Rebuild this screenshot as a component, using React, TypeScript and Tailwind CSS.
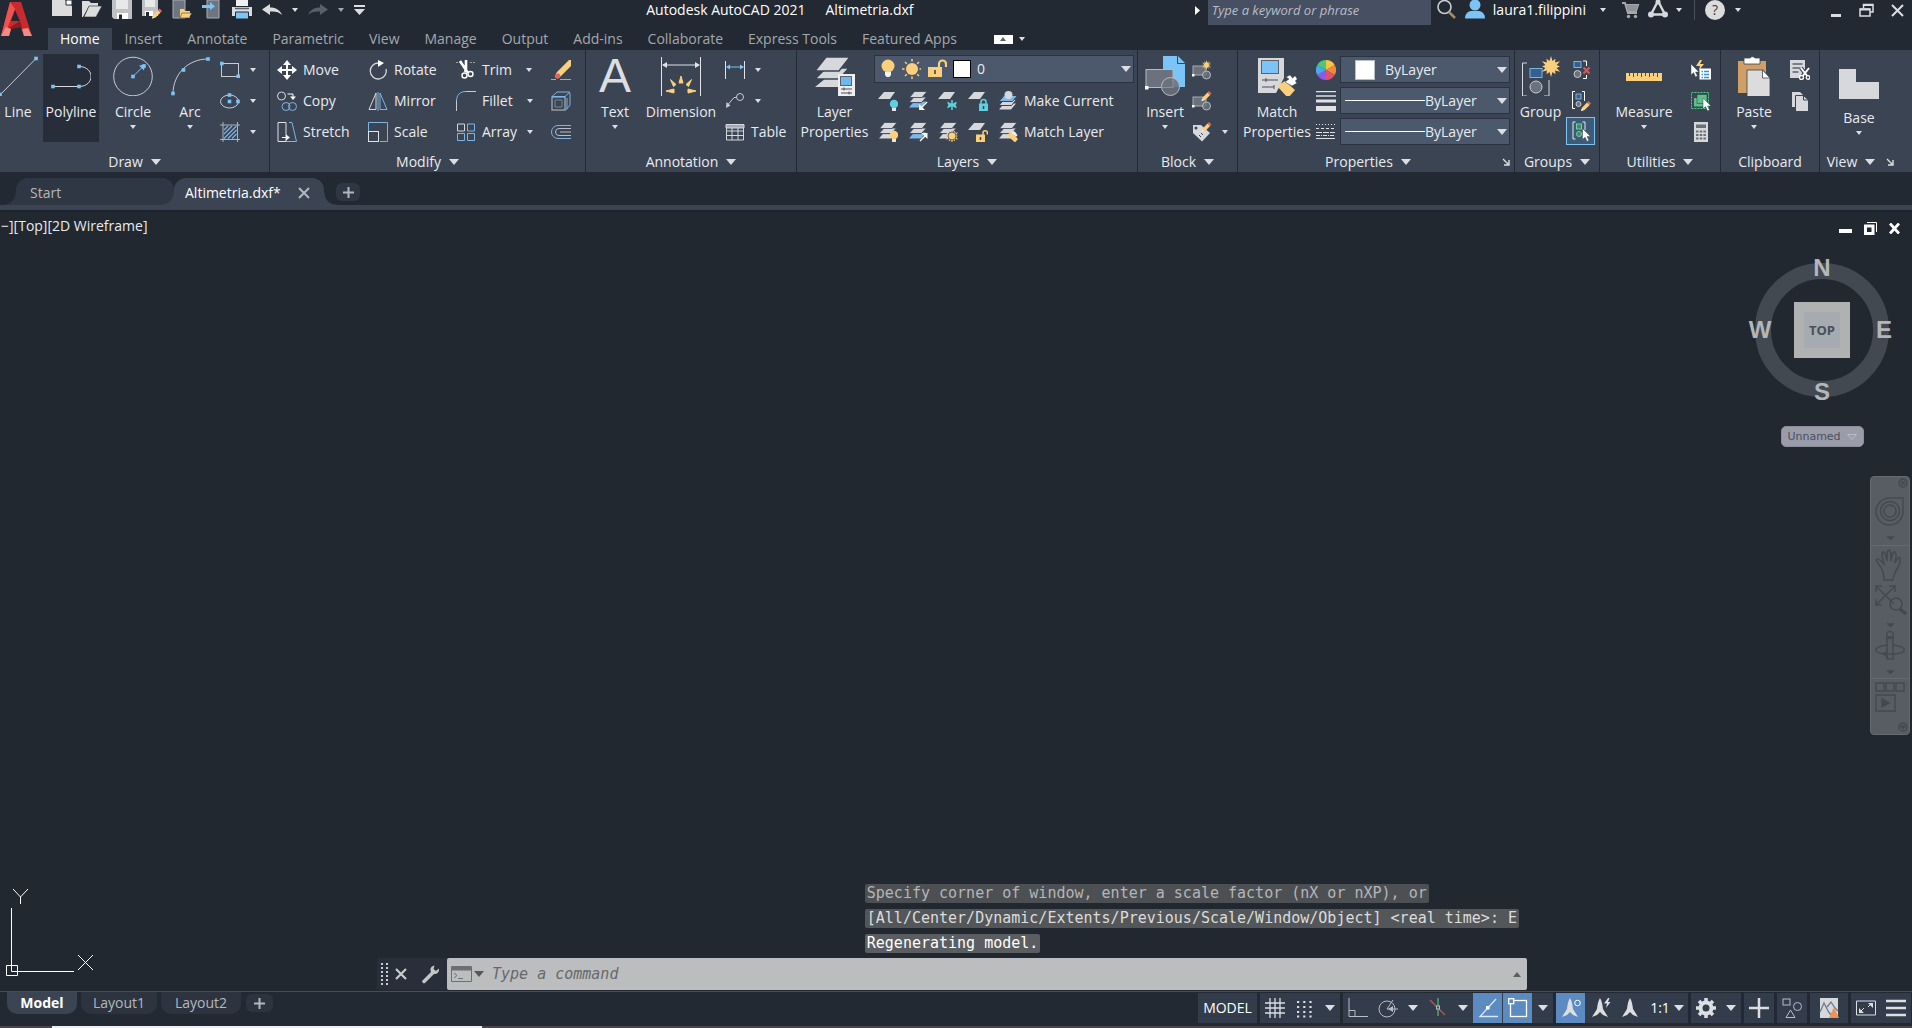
import React from "react";
import clsx from "clsx";

type IconProps = { children: React.ReactNode; size?: number; className?: string };

// Small icons live on a 20px grid, ribbon icons on a 40px grid
const Icon = ({ children, size = 20, className }: IconProps) => (
  <svg
    width={size}
    height={size}
    viewBox={`0 0 ${size} ${size}`}
    fill="none"
    className={clsx("shrink-0", className)}
    aria-hidden="true"
  >
    {children}
  </svg>
);

type CaretProps = { big?: boolean; dark?: boolean; className?: string };

const Caret = ({ big, dark, className }: CaretProps) => (
  <svg
    width={big ? 10 : 6}
    height={big ? 6 : 4}
    viewBox="0 0 10 6"
    preserveAspectRatio="none"
    className={clsx("shrink-0", dark ? "fill-[#55585b]" : "fill-[#dcdee2]", className)}
    aria-hidden="true"
  >
    <path d="M0 0h10L5 6z" />
  </svg>
);

const Dot = ({ x, y }: { x: number; y: number }) => (
  <rect x={x - 1.8} y={y - 1.8} width="3.6" height="3.6" fill="#7cc4f5" />
);

/* ---------- shared icon parts ---------- */

const Sheets = ({ mid = "#d6d8dc", low = "#d6d8dc" }: { mid?: string; low?: string }) => (
  <>
    <path d="M6 10.5h12l-5 6H1z" fill={low} />
    <path d="M6 6h12.5l-5 5.6H1z" fill={mid} stroke="#3b4453" />
    <path d="M6.500 .5H19l-5 6H1.500z" fill="#d6d8dc" stroke="#3b4453" strokeWidth=".8" />
  </>
);

const Bulb = ({ color }: { color: string }) => (
  <>
    <circle cx="16" cy="13" r="4.200" fill={color} />
    <rect x="14" y="17" width="4" height="3" fill="#e6e6e6" />
  </>
);

const Pencil = ({ x = 0, y = 0 }: { x?: number; y?: number }) => (
  <g transform={`translate(${x} ${y})`}>
    <path d="m0 10 1.200-3.600L6 1.500l2.600 2.600-5 4.800z" fill="#fbd07d" />
    <path d="M6 1.500 7.500 0 10 2.500 8.600 4.100z" fill="#e06a5c" />
    <path d="m0 10 .8-2.500 1.700 1.700z" fill="#efefef" />
  </g>
);

const Cursor = ({ x, y }: { x: number; y: number }) => (
  <path
    transform={`translate(${x} ${y})`}
    d="M0 0v11l2.600-2.300L4.500 13l2-1-1.900-4H8z"
    fill="#fff"
    stroke="#3b4453"
    strokeWidth=".5"
  />
);

const Star = ({ cx, cy, r, k = 0.55 }: { cx: number; cy: number; r: number; k?: number }) => {
  const points = Array.from({ length: 24 }, (_, i) => {
    const a = (i * Math.PI) / 12;
    const d = i % 2 ? r * k : i % 4 ? r * 0.85 : r;
    return `${cx + d * Math.sin(a)},${cy - d * Math.cos(a)}`;
  }).join(" ");
  return <polygon points={points} fill="#fbd07d" />;
};

const BlockShape = () => (
  <>
    <rect x="1" y="6" width="13" height="9" fill="#6b717d" stroke="#a8acb4" />
    <circle cx="14.500" cy="15" r="4" fill="#6b717d" fillOpacity=".8" stroke="#b6bac1" />
    <rect y="14" width="2.500" height="2.500" fill="#fff" />
  </>
);

/* ---------- 20px icons ---------- */

const icons = {
  rect: (
    <Icon>
      <rect x="1.500" y="3.500" width="17" height="13" stroke="#c9ccd2" />
      <Dot x={1.8} y={3.5} />
      <Dot x={18.2} y={16.2} />
    </Icon>
  ),
  ellipse: (
    <Icon>
      <ellipse cx="9.500" cy="10.500" rx="9" ry="6.500" stroke="#c9ccd2" />
      <Dot x={9.5} y={4} />
      <Dot x={9.5} y={10.5} />
      <Dot x={18} y={10.5} />
    </Icon>
  ),
  hatch: (
    <Icon>
      <path d="M3 0v20M17.500 0v20M0 3h20M0 17.500h20" stroke="#aeb2ba" />
      <path d="m4 8 4-4M4 12l8-8M4 16.500 16.500 4M8 16.500l8.500-8.500M12 16.500l4.500-4.500" stroke="#7cb4e4" strokeWidth="1.200" />
    </Icon>
  ),
  move: (
    <Icon>
      <path d="M10 2v16M2 10h16" stroke="#fff" strokeWidth="2" />
      <path d="m10 0 4 5H6zM10 20l4-5H6zM0 10l5-4v8zM20 10l-5-4v8z" fill="#fff" />
    </Icon>
  ),
  copy: (
    <Icon>
      <circle cx="4.500" cy="5" r="4" stroke="#d6d8dc" />
      <path d="M10.500 3H16v4" stroke="#fff" />
      <path d="M13 5.500h6L16 9z" fill="#fff" />
      <circle cx="9" cy="15.500" r="4" stroke="#7cb4e4" />
      <circle cx="15.500" cy="15.500" r="4" stroke="#7cb4e4" />
    </Icon>
  ),
  stretch: (
    <Icon>
      <path d="M1 .5h8v19H1z" stroke="#e1e3e7" />
      <path d="M12 .5h3l4.500 19H9" stroke="#7cb4e4" />
      <path d="M5 15.500h5" stroke="#fff" />
      <path d="m9 12.500 4 3-4 3z" fill="#fff" />
    </Icon>
  ),
  rotate: (
    <Icon>
      <path d="M10.500 3a8 8 0 1 0 7.500 6" stroke="#d6d8dc" strokeWidth="1.300" />
      <path d="m10 0 6 3-6 4z" fill="#fff" />
    </Icon>
  ),
  mirror: (
    <Icon>
      <path d="M8 2v16.500H1z" stroke="#d6d8dc" />
      <path d="M12 2v16.500h7z" stroke="#7cb4e4" />
      <path d="M10 1v19" stroke="#7cb4e4" />
    </Icon>
  ),
  scale: (
    <Icon>
      <path d="M.5 9V.5h19v19H12" stroke="#7cb4e4" />
      <rect x=".5" y="9.500" width="10" height="10" stroke="#e1e3e7" />
    </Icon>
  ),
  trim: (
    <Icon>
      <path d="M0 2.500h4M14 2.500h6" stroke="#9aa0aa" strokeDasharray="2 1" />
      <path d="m4 1 8 12M10 0v9l-1 3" stroke="#fff" strokeWidth="2.600" />
      <circle cx="8.500" cy="15.500" r="2.500" stroke="#fff" strokeWidth="1.400" />
      <circle cx="14.500" cy="14" r="2.500" stroke="#fff" strokeWidth="1.400" />
    </Icon>
  ),
  fillet: (
    <Icon>
      <path d="M.5 10C.5 4 4 .5 10 .5" stroke="#7cb4e4" />
      <path d="M10 .5h10M.5 10v10" stroke="#c9ccd2" />
    </Icon>
  ),
  array: (
    <Icon>
      <path d="M1.500 2h7v7h-7z" stroke="#d6d8dc" />
      <path d="M11.500 2h7v7h-7zM1.500 11.500h7v7h-7zM11.500 11.500h7v7h-7z" stroke="#7cb4e4" />
    </Icon>
  ),
  erase: (
    <Icon>
      <path d="M0 19.500h5M9 19.500h11" stroke="#7cb4e4" />
      <path d="M18 0h2v6L10 16l-4-4z" fill="#fbd07d" />
      <path d="m6 12 4 4-2 1.500L5 14z" fill="#fff" />
      <circle cx="6.500" cy="16" r="2.700" fill="#e8615c" />
    </Icon>
  ),
  explode: (
    <Icon>
      <rect x="1" y="6" width="13" height="13" stroke="#9ca1ab" strokeWidth="1.400" />
      <path d="M1 5.500 6 1h13l-5 4.500zM19 2v12l-4 5M16 7v11" stroke="#7cb4e4" />
      <path d="M4 9h7v7H4z" stroke="#7d8490" />
    </Icon>
  ),
  offset: (
    <Icon>
      <path d="M20 3.500H7a6.500 6.500 0 0 0 0 13h13" stroke="#7cb4e4" />
      <path d="M20 6.500H8a3.500 3.500 0 0 0 0 7h12" stroke="#b9bdc5" />
      <path d="M20 10H9" stroke="#b9bdc5" />
    </Icon>
  ),
  linear: (
    <Icon>
      <path d="M.5 1v18M19.500 1v18" stroke="#e1e3e7" />
      <path d="M2 7h16" stroke="#7cc4f5" />
      <path d="m1 7 4-2.500v5zM19 7l-4-2.500v5z" fill="#7cc4f5" />
    </Icon>
  ),
  leader: (
    <Icon>
      <circle cx="15" cy="6" r="3.500" stroke="#c9ccd2" />
      <path d="M11.500 6.500H9l-6 7" stroke="#c9ccd2" />
      <path d="m1 17 .5-6 4 3.500z" fill="#c9ccd2" />
    </Icon>
  ),
  table: (
    <Icon>
      <path d="M1.500 3h17v15h-17zM1.500 9h17M1.500 13.500h17M7 6v12M13 6v12" stroke="#d6d8dc" />
      <path d="M1 2.500h18V6H1z" fill="#a4a9b3" stroke="#d6d8dc" />
    </Icon>
  ),
  layOff: (
    <Icon>
      <path d="M6 1h11l-5 7H0z" fill="#d6d8dc" />
      <Bulb color="#5fd0e0" />
    </Icon>
  ),
  layIsolate: (
    <Icon>
      <Sheets low="#7cb8ee" />
      <path d="m19 11-6 6" stroke="#fff" strokeWidth="1.500" />
      <path d="M11 19v-6l6 6z" fill="#fff" />
    </Icon>
  ),
  layFreeze: (
    <Icon>
      <path d="M6 1h11l-5 7H0z" fill="#d6d8dc" />
      <path d="M14 9v10M9.500 11.500l9 5M18.500 11.500l-9 5M10 14h8" stroke="#5fd0e0" strokeWidth="1.500" />
    </Icon>
  ),
  layLock: (
    <Icon>
      <path d="M6 1h11l-5 7H0z" fill="#d6d8dc" />
      <path d="M13 13v-2a2.500 2.500 0 0 1 5 0v2" stroke="#5fd0e0" strokeWidth="1.500" />
      <rect x="11" y="12.500" width="9" height="7.500" fill="#5fd0e0" />
      <path d="M15.500 15v3" stroke="#3b4453" strokeWidth="1.500" />
    </Icon>
  ),
  makeCurrent: (
    <Icon>
      <path d="M6 12.500h12l-5 6H1z" fill="#d6d8dc" />
      <path d="M6 8.500h12.500l-5 6H1z" fill="#d6d8dc" stroke="#3b4453" />
      <path d="M6 4.500h13.500l-5 6H1z" fill="#7cb8ee" stroke="#3b4453" />
      <circle cx="10.500" cy="4" r="4" fill="#d6d8dc" />
    </Icon>
  ),
  layOn: (
    <Icon>
      <Sheets />
      <Bulb color="#fbd07d" />
    </Icon>
  ),
  layUnisolate: (
    <Icon>
      <Sheets low="#7cb8ee" />
      <path d="m12 19 6-6" stroke="#fff" strokeWidth="1.500" />
      <path d="M19.500 11v6l-6-6z" fill="#fff" />
    </Icon>
  ),
  layThaw: (
    <Icon>
      <Sheets />
      <Star cx={14} cy={14} r={7} k={0.6} />
      <circle cx="14" cy="14" r="4" fill="#fbd07d" stroke="#3b4453" strokeWidth=".8" />
    </Icon>
  ),
  layUnlock: (
    <Icon>
      <path d="M6 1h11l-5 7H0z" fill="#d6d8dc" />
      <path d="M15 13v-2a2.200 2.200 0 0 1 4.400 0v1.500" stroke="#fbd07d" strokeWidth="1.500" />
      <rect x="8" y="12.500" width="9" height="7.500" fill="#fbd07d" />
      <path d="M12.500 15v3" stroke="#3b4453" strokeWidth="1.500" />
    </Icon>
  ),
  matchLayer: (
    <Icon>
      <Sheets />
      <path d="m9 13 4-3 7 7-3 3.500z" fill="#fbd07d" />
      <path d="m13 10 3-1 3.500 4-1.500 2z" fill="#efefef" />
    </Icon>
  ),
  createBlock: (
    <Icon>
      <BlockShape />
      <Star cx={14.5} cy={5} r={5.5} k={0.4} />
    </Icon>
  ),
  editBlock: (
    <Icon>
      <BlockShape />
      <Pencil x={9.5} />
    </Icon>
  ),
  editAttr: (
    <Icon>
      <path d="M1 3h8l9 8-8 8.500L1 11z" fill="#d6d8dc" />
      <circle cx="4" cy="6" r="1.500" fill="#3b4453" />
      <path d="m7 13 2 2m0-4 2 2" stroke="#3b4453" />
      <Pencil x={9.5} />
    </Icon>
  ),
  wheel: (
    <Icon>
      <path d="M10 10V0a10 10 0 0 1 8.700 5z" fill="#f6c544" />
      <path d="m10 10 8.700-5a10 10 0 0 1 0 10z" fill="#f0883e" />
      <path d="m10 10 8.700 5A10 10 0 0 1 10 20z" fill="#e0526a" />
      <path d="M10 10v10a10 10 0 0 1-8.700-5z" fill="#8a5af0" />
      <path d="m10 10-8.700 5a10 10 0 0 1 0-10z" fill="#4aa8ec" />
      <path d="M10 10 1.300 5A10 10 0 0 1 10 0z" fill="#4cc878" />
    </Icon>
  ),
  lineWeight: (
    <Icon>
      <path d="M0 .5h20M0 5h20" stroke="#dfe1e5" strokeWidth="1.500" />
      <path d="M0 10h20" stroke="#dfe1e5" strokeWidth="3" />
      <path d="M0 17.500h20" stroke="#dfe1e5" strokeWidth="5" />
    </Icon>
  ),
  lineType: (
    <Icon>
      <path d="M0 2.500h19" stroke="#dfe1e5" strokeDasharray="1 2" />
      <path d="M0 6.500h19" stroke="#dfe1e5" strokeDasharray="3 2" />
      <path d="M0 10.500h19" stroke="#dfe1e5" strokeDasharray="6 1" />
      <path d="M0 13.500h19" stroke="#dfe1e5" strokeDasharray="4 1 1 1" />
      <path d="M0 16.500h19" stroke="#dfe1e5" />
    </Icon>
  ),
  ungroup: (
    <Icon>
      <rect x="3" y="1.500" width="7" height="6" fill="#355f8c" stroke="#7cb4e4" />
      <circle cx="6.500" cy="14" r="3.500" fill="#6b717d" stroke="#c9ccd2" />
      <path d="M12 1h3.500v5M12 18.500h3.500V15" stroke="#fff" />
      <path d="m12.500 7.500 6 6m0-6-6 6" stroke="#e0524e" strokeWidth="2.200" />
    </Icon>
  ),
  groupEdit: (
    <Icon>
      <path d="M4 .5H1.500v17H4M11 .5h2.500V10" stroke="#fff" />
      <rect x="5" y="3" width="5" height="5" fill="#355f8c" stroke="#7cb4e4" />
      <circle cx="7.500" cy="13" r="2.500" fill="#6b717d" stroke="#c9ccd2" />
      <Pencil x={10} y={10} />
    </Icon>
  ),
  groupSelect: (
    <Icon>
      <path d="M4.500 1H2v17h2.500M11.500 1H14v8" stroke="#e6e8eb" />
      <rect x="5.500" y="3" width="5" height="5" fill="#3f8c63" stroke="#6fd59b" />
      <circle cx="8" cy="13" r="2.500" fill="#3f8c63" stroke="#6fd59b" />
      <Cursor x={11.5} y={7.5} />
    </Icon>
  ),
  quickSelect: (
    <Icon>
      <path d="m9 0-4 6h4l-1 4 5-6H9l2-4z" fill="#fbd07d" />
      <rect x="8.500" y="8.500" width="11.500" height="11" fill="#fff" />
      <path d="M10.500 11.500H12m1 0h5m-7.500 3H12m1 0h5m-7.500 3H12m1 0h5" stroke="#3f8fd6" strokeWidth="1.300" />
      <Cursor x={0} y={4} />
    </Icon>
  ),
  selectAll: (
    <Icon>
      <rect x=".5" y="1.500" width="17" height="16" stroke="#4fd18b" strokeDasharray="2 1" />
      <rect x="3" y="7" width="9" height="8.500" fill="#5fbf8b" />
      <rect x="6" y="3.500" width="10" height="9" fill="#5fbf8b" stroke="#3b4453" strokeWidth=".6" />
      <Cursor x={12} y={7} />
    </Icon>
  ),
  calculator: (
    <Icon>
      <rect x="3" width="14" height="20" fill="#d6d8dc" />
      <rect x="5" y="2.500" width="10" height="3.500" fill="#6b6f76" />
      <path d="M5 9.500h10M5 13h10M5 16.500h10" stroke="#6b6f76" strokeWidth="2" strokeDasharray="2.500 1.200" />
    </Icon>
  ),
  cut: (
    <Icon>
      <path d="M0 0h15v9l-6 9H0z" fill="#d6d8dc" />
      <path d="M2.500 4h10m-10 4h8m-8 4h6" stroke="#5c626d" strokeWidth="1.300" />
      <path d="m11 8 7 9m1-9-7 9" stroke="#3b4453" strokeWidth="4" />
      <path d="m11 8 7 9m1-9-7 9" stroke="#fff" strokeWidth="2" />
      <circle cx="11.500" cy="17.500" r="2" fill="#3b4453" stroke="#fff" strokeWidth="1.300" />
      <circle cx="18" cy="17.500" r="1.800" fill="#3b4453" stroke="#fff" strokeWidth="1.300" />
    </Icon>
  ),
  copyClip: (
    <Icon>
      <path d="M2 1h8l3 3v12H2z" fill="#d6d8dc" />
      <path d="M5.500 4.500h8L18.500 9v11.500h-13z" fill="#d6d8dc" stroke="#3b4453" />
      <path d="M13.500 4.500V9h5" stroke="#3b4453" />
    </Icon>
  ),
};

/* ---------- 40px icons ---------- */

const bigIcons = {
  line: (
    <Icon size={40}>
      <path d="M2 39 38 2.500" stroke="#c9ccd2" />
      <Dot x={2} y={38.5} />
      <Dot x={38} y={2.5} />
    </Icon>
  ),
  polyline: (
    <Icon size={40}>
      <path d="M2 30.500h26c16 0 16-20 0-20" stroke="#d6d8dc" />
      <Dot x={2} y={30.5} />
      <Dot x={28} y={30.5} />
      <Dot x={28} y={10.5} />
    </Icon>
  ),
  circle: (
    <Icon size={40}>
      <circle cx="20" cy="20.500" r="19.300" stroke="#c9ccd2" />
      <path d="m20 20.500 10.500-10.500" stroke="#7cc4f5" />
      <path d="m32 8.500-1 6-5-5z" fill="#7cc4f5" />
      <Dot x={20} y={20.5} />
      <Dot x={31} y={10} />
    </Icon>
  ),
  arc: (
    <Icon size={40}>
      <path d="M3 38C3 18 18 3 38 3" stroke="#c9ccd2" />
      <Dot x={3} y={37.5} />
      <Dot x={13.5} y={14} />
      <Dot x={38} y={3} />
    </Icon>
  ),
  dimension: (
    <Icon size={40}>
      <path d="M.5 1v40M39.500 1v40M2 9h36" stroke="#e1e3e7" />
      <path d="m1 9 5-3v6zM39 9l-5-3v6z" fill="#e1e3e7" />
      <path
        d="m20 20 2 7h-4zM9.500 23.500l5.500 5-2.500 2zM30.500 23.500l-5.500 5 2.500 2zM5 35l8-2v4zM35 35l-8-2v4z"
        fill="#fbd07d"
        stroke="#fbd07d"
      />
    </Icon>
  ),
  layerProps: (
    <Icon size={40}>
      <path d="M11 22h23L24 31H0z" fill="#d6d8dc" />
      <path d="M11 12h23L24 23H0z" fill="#d6d8dc" stroke="#3b4453" strokeWidth="1.500" />
      <path d="M11 1h24L24 15H0z" fill="#d6d8dc" stroke="#3b4453" strokeWidth="1.500" />
      <rect x="23" y="18" width="17" height="22" fill="#efefef" />
      <rect x="25.500" y="20.500" width="11" height="9" fill="#6fb7ee" stroke="#5c626d" />
      <path d="M26 33h11M26 37h11M29 31.500v3M34 35.500v3" stroke="#4a4f59" />
    </Icon>
  ),
  insert: (
    <Icon size={40}>
      <path d="M18 0h15l7 7v24H18z" fill="#7cc4f5" />
      <path d="M32.500 0v7.500H40" stroke="#3b4453" />
      <rect x="1" y="13.500" width="27" height="18" fill="#6b717d" stroke="#b6bac1" />
      <circle cx="25.500" cy="30.500" r="9" fill="#6b717d" fillOpacity=".85" stroke="#b6bac1" />
      <path d="M16.500 31.500H28v-11" stroke="#9ca1ab" strokeDasharray="1 1" />
      <rect y="30" width="3.500" height="3.500" fill="#fff" />
    </Icon>
  ),
  matchProps: (
    <Icon size={40}>
      <path d="M1 2h26v20l-8 15H1z" fill="#d6d8dc" />
      <rect x="4.500" y="4.500" width="17" height="13" fill="#7cc4f5" stroke="#5c626d" />
      <path d="M5 24h16M5 31h12M9 22v4M17 29v4" stroke="#4a4f59" />
      <path d="m20 30 8-5 10 9-7 8z" fill="#fbd07d" />
      <path d="m28 26 4-3-3-2 4-2 7 8-5 3z" fill="#fff" stroke="#3b4453" strokeWidth=".5" />
      <path d="m34 24 4-4 2 3-4 4z" fill="#fff" />
    </Icon>
  ),
  group: (
    <Icon size={40}>
      <path d="M6 7H1.500v33H6M23 40h5V24" stroke="#d6d8dc" />
      <rect x="9" y="12.500" width="12" height="9" fill="#355f8c" stroke="#7cb4e4" />
      <circle cx="15" cy="31" r="6" fill="#6b717d" stroke="#c9ccd2" />
      <Star cx={30} cy={10.5} r={10.5} />
    </Icon>
  ),
  measure: (
    <Icon size={40}>
      <rect x="2" y="17" width="36" height="8" fill="#fbd07d" />
      <path d="M5.500 17v3m4-3v4m4-4v3m4-3v4m4-4v3m4-3v4m4-4v3m4-3v4" stroke="#4a4f59" />
    </Icon>
  ),
  paste: (
    <Icon size={40}>
      <path d="M4 5h28v32H4z" fill="#cf9f66" />
      <path d="M10 2h6a3 3 0 0 1 5 0h5v6H10z" fill="#fff" stroke="#3b4453" strokeWidth=".8" />
      <path d="M13 14h16l7 8v19H13z" fill="#dcdcdc" stroke="#3b4453" strokeWidth=".8" />
      <path d="m28.500 14 7.500 8h-7.500z" fill="#fff" stroke="#3b4453" strokeWidth=".8" />
    </Icon>
  ),
  base: (
    <Icon size={40}>
      <path d="M0 7h17v13h23v17H0z" fill="#d6d8dc" />
    </Icon>
  ),
};

/* ---------- ribbon building blocks ---------- */

type PanelProps = {
  title: string;
  width: string;
  caret?: boolean;
  launcher?: boolean;
  last?: boolean;
  children: React.ReactNode;
};

const Panel = ({ title, width, caret = true, launcher, last, children }: PanelProps) => (
  <section className={clsx("flex shrink-0 flex-col", width, !last && "border-r border-[#232a34]")}>
    <div className="flex flex-1 items-start pt-1">{children}</div>
    <div className="flex h-5 items-center">
      <button type="button" className="flex flex-1 items-center justify-center gap-2">
        {title}
        {caret && <Caret big />}
      </button>
      {launcher && (
        <button type="button" aria-label={`${title} settings`} className="w-4">
          <svg width="8" height="8" viewBox="0 0 8 8" className="mx-auto" fill="none" stroke="#dcdee2">
            <path d="m1 1 5 5M7 2v5H2" strokeWidth="1.400" />
          </svg>
        </button>
      )}
    </div>
  </section>
);

type BigButtonProps = {
  icon: React.ReactNode;
  label: string;
  caret?: boolean;
  active?: boolean;
  className?: string;
};

const BigButton = ({ icon, label, caret, active, className }: BigButtonProps) => (
  <button
    type="button"
    className={clsx(
      "flex h-22 shrink-0 flex-col items-center pt-0.5 leading-5",
      active && "bg-[#272e39]",
      className
    )}
  >
    <span className="mb-1.5 flex h-10 items-center justify-center">{icon}</span>
    <span>{label}</span>
    {caret && <Caret className="mt-[3px]" />}
  </button>
);

type ToolProps = { icon: React.ReactNode; label?: string; name?: string; caret?: string };

const Tool = ({ icon, label, name, caret }: ToolProps) => (
  <button type="button" aria-label={label ? undefined : name} className="flex h-[31px] items-center gap-1.5">
    {icon}
    {label}
    {caret && <Caret className={caret} />}
  </button>
);

const PropertySelect = ({ name, line }: { name: string; line?: boolean }) => (
  <div className="flex h-[27px] items-center border border-[#2b3340] bg-[#4c586b]">
    {line ? (
      <span className="ml-1 h-px w-20 bg-white" />
    ) : (
      <span className="mr-2.5 ml-3.5 size-5 border border-[#b9bdc5] bg-white" />
    )}
    <select aria-label={name} className="h-full min-w-0 flex-1 appearance-none bg-transparent outline-none">
      <option>ByLayer</option>
    </select>
    <Caret big className="mr-0.5" />
  </div>
);

/* ---------- title bar ---------- */

const quickAccess = [
  {
    name: "New",
    icon: (
      <Icon>
        <path d="M0 0h13l7 6v10H0z" fill="#dcdcdc" />
        <path d="M14 0v5h6V0z" fill="#fff" stroke="#222933" />
      </Icon>
    ),
  },
  {
    name: "Open",
    icon: (
      <Icon>
        <path d="M0 1h7l2 2h7v3H7L1 17H0z" fill="#dcdcdc" />
        <path d="M7 6h13l-6 11H2z" fill="#dcdcdc" stroke="#222933" strokeWidth=".6" />
      </Icon>
    ),
  },
  {
    name: "Save",
    icon: (
      <Icon>
        <path d="M0 0h20v19H2l-2-2z" fill="#bfc1c5" />
        <path d="M4 0h12v9H4z" fill="#e8e8e8" />
        <path d="M5 13h11v6H5z" fill="#fff" />
        <path d="M7 14.500h3V19H7z" fill="#222933" />
      </Icon>
    ),
  },
  {
    name: "Save as",
    icon: (
      <Icon>
        <path d="M0 0h16v16H0z" fill="#bfc1c5" />
        <path d="M3 0h10v7H3z" fill="#e8e8e8" />
        <path d="M3 11h8v5H3z" fill="#fff" />
        <path d="M4 12h3v4H4z" fill="#222933" />
        <Pencil x={10} y={8.5} />
      </Icon>
    ),
  },
  {
    name: "Open from web",
    icon: (
      <Icon>
        <path d="M1 0h12v18H1z" fill="#6f7580" stroke="#a8acb4" />
        <path d="M8 9h4l1 2h5v7H8z" fill="#fbd07d" />
        <path d="M10 13h10l-3 5H8z" fill="#fbd07d" stroke="#222933" strokeWidth=".5" />
      </Icon>
    ),
  },
  {
    name: "Save to web",
    icon: (
      <Icon>
        <path d="M5 0h12v18H5z" fill="#6f7580" stroke="#a8acb4" />
        <path d="M0 5h8V2l5 4.500L8 10V8H0z" fill="#7cc4f5" />
      </Icon>
    ),
  },
  {
    name: "Plot",
    icon: (
      <Icon>
        <path d="M4 0h12v6H4z" fill="#efefef" />
        <path d="M0 7h20v9H0z" fill="#dcdcdc" />
        <path d="M3 8.500h14" stroke="#5c626d" strokeWidth="1.500" />
        <path d="M3.500 12h13v7h-13z" fill="#7cc4f5" stroke="#222933" />
      </Icon>
    ),
  },
];

const undoPath = "M8 4v3.500c6 0 10 2.500 12 7.500-3-3-7-4-12-3.500V15L0 9.500z";

const TitleBar = () => (
  <div className="flex h-7 items-center pb-2">
    <div className="flex shrink-0 items-center gap-2.5 pl-1">
      {quickAccess.map((q) => (
        <button type="button" key={q.name} aria-label={q.name}>
          {q.icon}
        </button>
      ))}
      <button type="button" aria-label="Undo" className="flex items-center gap-2.5">
        <Icon>
          <path d={undoPath} fill="#dcdcdc" />
        </Icon>
        <Caret />
      </button>
      <button type="button" aria-label="Redo" className="flex items-center gap-2.5">
        <Icon>
          <path d={undoPath} fill="#5a606b" transform="matrix(-1 0 0 1 20 0)" />
        </Icon>
        <Caret className="opacity-70" />
      </button>
      <button type="button" aria-label="Customize toolbar">
        <svg width="11" height="10" viewBox="0 0 11 10" fill="#dcdee2">
          <path d="M0 0h11v2H0zM0 4h11L5.500 10z" />
        </svg>
      </button>
    </div>

    <h1 className="flex min-w-0 flex-1 justify-center gap-5 whitespace-nowrap text-white">
      <span>Autodesk AutoCAD 2021</span>
      <span>Altimetria.dxf</span>
    </h1>

    <div className="flex shrink-0 items-center pr-2">
      <svg width="5" height="9" viewBox="0 0 5 9" className="mr-2 fill-white">
        <path d="m0 0 5 4.500L0 9z" />
      </svg>
      <input
        type="text"
        aria-label="Search"
        placeholder="Type a keyword or phrase"
        className="mb-[-4px] h-[26px] w-[223px] bg-[#474f62] px-1 pb-1 text-[13px] italic outline-none placeholder:text-[#b9bdc6]"
      />
      <button type="button" aria-label="Find" className="ml-1.5">
        <Icon>
          <circle cx="7.500" cy="7" r="6.500" stroke="#c9ccd2" strokeWidth="1.600" />
          <path d="m12 12 6 6" stroke="#a58b6c" strokeWidth="2.500" />
        </Icon>
      </button>
      <button type="button" className="ml-2 flex items-center gap-2">
        <Icon>
          <circle cx="10" cy="5" r="5.500" fill="#7cc4f5" />
          <path d="M0 18.500c0-5 3-7.500 7-7.500h6c4 0 7 2.500 7 7.500z" fill="#7cc4f5" />
        </Icon>
        <span className="text-[14px] text-white">laura1.filippini</span>
        <Caret className="ml-1.5" />
      </button>
      <button type="button" aria-label="App store" className="ml-3.5">
        <Icon>
          <path d="M2 3h3l3 10h9M6 5h12l-2 6H8" stroke="#a8a8a8" strokeWidth="2" />
          <path d="M6 5h12l-2 6H8z" fill="#8f9296" />
          <circle cx="8.500" cy="16.500" r="1.700" fill="#a8a8a8" />
          <circle cx="15.500" cy="16.500" r="1.700" fill="#a8a8a8" />
        </Icon>
      </button>
      <button type="button" aria-label="Autodesk account" className="ml-2 flex items-center gap-2">
        <Icon>
          <path d="M10 1 3 14.500h14z" stroke="#d6d8dc" strokeWidth="2.400" />
          <circle cx="10" cy="2" r="2.500" fill="#d6d8dc" />
          <circle cx="3" cy="14.500" r="3" fill="#d6d8dc" />
          <circle cx="17" cy="14.500" r="3" fill="#d6d8dc" />
        </Icon>
        <Caret />
      </button>
      <span className="ml-3 h-5 w-px bg-[#4a505b]" />
      <button type="button" aria-label="Help" className="ml-2.5 flex items-center gap-2.5">
        <span className="flex size-5 items-center justify-center rounded-full bg-[#dcdcdc] text-[#333b47]">?</span>
        <Caret />
      </button>
      <button type="button" aria-label="Minimize" className="mt-2.5 ml-[90px] h-[3px] w-2.5 bg-[#dcdee2]" />
      <button type="button" aria-label="Restore" className="ml-[18px]">
        <svg width="15" height="14" viewBox="0 0 15 14" fill="none" stroke="#dcdee2" strokeWidth="1.500">
          <path d="M4.500 5V1.500h9.500V9h-3M1 6h10v7H1z" />
          <path d="M4 2h10M1 6.500h10" strokeWidth="2" />
        </svg>
      </button>
      <button type="button" aria-label="Close" className="ml-[17px]">
        <svg width="13" height="13" viewBox="0 0 13 13" stroke="#dcdee2" strokeWidth="2">
          <path d="m1 1 11 11M12 1 1 12" />
        </svg>
      </button>
    </div>
  </div>
);

const ribbonTabs = [
  "Home",
  "Insert",
  "Annotate",
  "Parametric",
  "View",
  "Manage",
  "Output",
  "Add-ins",
  "Collaborate",
  "Express Tools",
  "Featured Apps",
];

const Header = () => (
  <header className="flex">
    <button type="button" aria-label="Application menu" className="w-12 shrink-0 self-start">
      <svg width="32" height="38" viewBox="0 0 32 38">
        <path d="M10 2h11l11 34h-8l-3-9-9-1-3 10H1z" fill="#c92a30" />
        <path d="m10 2 5 7-8 20-6 7z" fill="#ef5350" />
        <path d="m15 10 5 11H11z" fill="#222933" />
        <path d="m9 28 11-7 2 6-10 2z" fill="#8e1c22" />
        <path d="m1 36 5-9 5 2-2 7zM24 36l-2-7 6-1 4 8z" fill="#f28b87" />
      </svg>
    </button>
    <div className="min-w-0 flex-1">
      <TitleBar />
      <nav className="flex h-[22px] items-center gap-px">
        {ribbonTabs.map((tab) => (
          <button
            type="button"
            key={tab}
            className={clsx(
              "h-full px-3 whitespace-nowrap",
              tab === "Home" ? "bg-[#3b4453] text-white" : "text-[#a4a8ae]"
            )}
          >
            {tab}
          </button>
        ))}
        <button type="button" aria-label="Minimize ribbon" className="ml-6 flex items-center gap-1.5">
          <span className="flex h-[9px] w-[19px] items-center justify-center bg-white">
            <svg width="6" height="4" viewBox="0 0 6 4" fill="#5c626d">
              <path d="M0 4h6L3 0z" />
            </svg>
          </span>
          <Caret />
        </button>
      </nav>
    </div>
  </header>
);

/* ---------- ribbon ---------- */

const Ribbon = () => (
  <div className="flex h-[122px] bg-[#3b4453] whitespace-nowrap text-[#e9ebee]">
    <Panel title="Draw" width="w-[270px]">
      <BigButton icon={bigIcons.line} label="Line" className="mr-[7px] w-9" />
      <BigButton icon={bigIcons.polyline} label="Polyline" active className="w-14" />
      <BigButton icon={bigIcons.circle} label="Circle" caret className="ml-1.5 w-14" />
      <BigButton icon={bigIcons.arc} label="Arc" caret className="ml-px w-14" />
      <div className="ml-0.5">
        <Tool icon={icons.rect} name="Rectangle" caret="ml-1" />
        <Tool icon={icons.ellipse} name="Ellipse" caret="ml-1" />
        <Tool icon={icons.hatch} name="Hatch" caret="ml-1" />
      </div>
    </Panel>

    <Panel title="Modify" width="w-[316px]">
      <div className="grid grid-cols-[91px_88px_95px_auto] pl-[7px]">
        <Tool icon={icons.move} label="Move" />
        <Tool icon={icons.rotate} label="Rotate" />
        <Tool icon={icons.trim} label="Trim" caret="ml-2" />
        <Tool icon={icons.erase} name="Erase" />
        <Tool icon={icons.copy} label="Copy" />
        <Tool icon={icons.mirror} label="Mirror" />
        <Tool icon={icons.fillet} label="Fillet" caret="ml-2" />
        <Tool icon={icons.explode} name="Explode" />
        <Tool icon={icons.stretch} label="Stretch" />
        <Tool icon={icons.scale} label="Scale" />
        <Tool icon={icons.array} label="Array" caret="ml-1" />
        <Tool icon={icons.offset} name="Offset" />
      </div>
    </Panel>

    <Panel title="Annotation" width="w-[211px]">
      <BigButton
        icon={<span className="font-['Liberation_Sans',sans-serif] text-[48px] text-[#dcdee2]">A</span>}
        label="Text"
        caret
        className="w-[58px]"
      />
      <BigButton icon={bigIcons.dimension} label="Dimension" className="w-[74px]" />
      <div className="ml-[7px]">
        <Tool icon={icons.linear} name="Linear" caret="ml-1" />
        <Tool icon={icons.leader} name="Leader" caret="ml-1" />
        <Tool icon={icons.table} label="Table" />
      </div>
    </Panel>

    <Panel title="Layers" width="w-[341px]">
      <BigButton
        icon={bigIcons.layerProps}
        label={"Layer\nProperties"}
        className="mr-0.5 w-[75px] whitespace-pre-line"
      />
      <div className="w-[260px]">
        <div className="mt-px mb-[2px] flex h-7 items-center border border-[#2b3340] bg-[#4c586b] pl-1.5">
          <Icon>
            <circle cx="7" cy="7" r="6.500" fill="#fbd07d" />
            <path d="M4 13h6v3l-1.500 2h-3L4 16z" fill="#f2f2f2" />
          </Icon>
          <Icon>
            <circle cx="11" cy="10" r="6" fill="#fbd07d" />
            <path
              d="M11 0v2.500M11 17.500V20M1 10h2.500M18.500 10H21M4 3l1.800 1.800M16.200 15.200 18 17M4 17l1.800-1.800M16.200 4.800 18 3"
              stroke="#fbd07d"
              strokeWidth="1.500"
            />
          </Icon>
          <Icon className="ml-1.5">
            <path d="M12 9V5a3.500 3.500 0 0 1 7 0v3" stroke="#fbd07d" strokeWidth="2.200" />
            <rect x="1" y="8" width="14" height="10" fill="#fbd07d" />
            <path d="M8 11v4" stroke="#3b4453" strokeWidth="1.600" />
          </Icon>
          <span className="ml-1.5 size-[18px] border border-black bg-white" />
          <select aria-label="Layer" className="h-full flex-1 appearance-none bg-transparent pl-1.5 outline-none">
            <option>0</option>
          </select>
          <Caret big className="mr-0.5" />
        </div>
        <div className="flex gap-2.5 pl-1">
          <Tool icon={icons.layOff} name="Off" />
          <Tool icon={icons.layIsolate} name="Isolate" />
          <Tool icon={icons.layFreeze} name="Freeze" />
          <Tool icon={icons.layLock} name="Lock" />
          <Tool icon={icons.makeCurrent} label="Make Current" />
        </div>
        <div className="flex gap-2.5 pl-1">
          <Tool icon={icons.layOn} name="Turn all layers on" />
          <Tool icon={icons.layUnisolate} name="Unisolate" />
          <Tool icon={icons.layThaw} name="Thaw all layers" />
          <Tool icon={icons.layUnlock} name="Unlock" />
          <Tool icon={icons.matchLayer} label="Match Layer" />
        </div>
      </div>
    </Panel>

    <Panel title="Block" width="w-[100px]">
      <BigButton icon={bigIcons.insert} label="Insert" caret className="w-[54px]" />
      <div>
        <Tool icon={icons.createBlock} name="Create block" />
        <Tool icon={icons.editBlock} name="Edit block" />
        <Tool icon={icons.editAttr} name="Edit attributes" caret="ml-1" />
      </div>
    </Panel>

    <Panel title="Properties" width="w-[277px]" launcher>
      <BigButton
        icon={bigIcons.matchProps}
        label={"Match\nProperties"}
        className="w-[78px] whitespace-pre-line"
      />
      <div className="grid grid-cols-[20px_170px] items-center gap-x-1">
        <Tool icon={icons.wheel} name="Object color" />
        <PropertySelect name="Color" />
        <Tool icon={icons.lineWeight} name="Lineweights" />
        <PropertySelect name="Lineweight" line />
        <Tool icon={icons.lineType} name="Linetypes" />
        <PropertySelect name="Linetype" line />
      </div>
    </Panel>

    <Panel title="Groups" width="w-[85px]">
      <BigButton icon={bigIcons.group} label="Group" className="w-[51px]" />
      <div className="flex w-[29px] flex-col items-center">
        <Tool icon={icons.ungroup} name="Ungroup" />
        <Tool icon={icons.groupEdit} name="Group edit" />
        <button
          type="button"
          aria-label="Group selection"
          aria-pressed="true"
          className="mt-px flex h-7 w-full items-center justify-center border border-[#7cc4f5] bg-[#3d5a78]"
        >
          {icons.groupSelect}
        </button>
      </div>
    </Panel>

    <Panel title="Utilities" width="w-[121px]">
      <BigButton icon={bigIcons.measure} label="Measure" caret className="w-[88px]" />
      <div className="ml-[3px]">
        <Tool icon={icons.quickSelect} name="Quick select" />
        <Tool icon={icons.selectAll} name="Select all" />
        <Tool icon={icons.calculator} name="Quick calculator" />
      </div>
    </Panel>

    <Panel title="Clipboard" width="w-[99px]" caret={false}>
      <BigButton icon={bigIcons.paste} label="Paste" caret className="w-[66px]" />
      <div className="ml-[3px]">
        <Tool icon={icons.cut} name="Cut" />
        <Tool icon={icons.copyClip} name="Copy clip" />
      </div>
    </Panel>

    <Panel title="View" width="w-[78px]" launcher last>
      <BigButton icon={bigIcons.base} label="Base" caret className="mt-1.5 w-[78px]" />
    </Panel>
  </div>
);

/* ---------- file tabs ---------- */

const FileTabs = () => (
  <div>
    <div className="flex h-[33px] items-end pl-4 text-[#b4b8be]">
      <button
        type="button"
        className="relative h-[27px] w-[158px] rounded-t-[12px] bg-[#303744] pt-0.5 pl-3.5 text-left before:absolute before:bottom-0 before:-left-3 before:size-3 before:bg-[radial-gradient(circle_at_0_0,transparent_11px,#303744_12px)]"
      >
        Start
      </button>
      <div className="relative flex h-[27px] w-[150px] items-center rounded-t-[12px] bg-[#3b4453] pt-0.5 pl-[11px] text-white before:absolute before:bottom-0 before:-left-3 before:size-3 before:bg-[radial-gradient(circle_at_0_0,transparent_11px,#3b4453_12px)] after:absolute after:-right-3 after:bottom-0 after:size-3 after:bg-[radial-gradient(circle_at_100%_0,transparent_11px,#3b4453_12px)]">
        <button type="button" className="flex-1 text-left">
          Altimetria.dxf*
        </button>
        <button type="button" aria-label="Close tab" className="mr-3.5">
          <svg width="12" height="12" viewBox="0 0 12 12" stroke="#b4b8be" strokeWidth="2">
            <path d="m1 1 10 10M11 1 1 11" />
          </svg>
        </button>
      </div>
      <button
        type="button"
        aria-label="New tab"
        className="mb-1 ml-3 flex h-[18px] w-6 items-center justify-center rounded-[6px] bg-[#303744]"
      >
        <svg width="11" height="11" viewBox="0 0 11 11" stroke="#b4b8be" strokeWidth="2">
          <path d="M5.500 0v11M0 5.500h11" />
        </svg>
      </button>
    </div>
    <div className="h-[5px] bg-[#3b4453]" />
  </div>
);

/* ---------- drawing area ---------- */

const compassLetter = "absolute flex size-6 items-center justify-center text-[24px] font-bold text-[#b4b6b8]";

const ViewCube = () => (
  <div className="absolute top-[51px] right-[23px] flex flex-col items-center font-['Liberation_Sans',sans-serif]">
    <div className="relative flex size-[134px] items-center justify-center rounded-full border-[16px] border-[#434951]">
      <button
        type="button"
        className="flex size-14 items-center justify-center border-[10px] border-[#b0b1b1] bg-[#a5abb0] font-['Open_Sans',sans-serif] text-[13px] font-bold text-[#4a5058]"
      >
        TOP
      </button>
      <span className={clsx(compassLetter, "-top-[23px]")}>N</span>
      <span className={clsx(compassLetter, "-bottom-[23px]")}>S</span>
      <span className={clsx(compassLetter, "-left-[23px]")}>W</span>
      <span className={clsx(compassLetter, "-right-[23px]")}>E</span>
    </div>
    <button
      type="button"
      className="mt-[29px] flex h-[21px] w-[83px] items-center justify-center gap-1.5 rounded-[5px] border border-[#8b8f9b] bg-[#9a9da9] font-['DejaVu_Sans',sans-serif] text-[11px] text-[#4b505c]"
    >
      Unnamed
      <svg width="10" height="6" viewBox="0 0 10 6" fill="none" stroke="#b9bcc6">
        <path d="M.5.5h9L5 5.500z" />
      </svg>
    </button>
  </div>
);

const NavBar = () => (
  <div className="absolute top-[264px] right-0.5 flex h-[259px] w-10 flex-col items-center rounded-[4px] border border-[#656a70] bg-[#585d63] text-[#444950]">
    <svg width="38" height="257" viewBox="0 0 38 257" fill="none" stroke="currentColor" strokeWidth="1.500">
      <circle cx="32" cy="6" r="4" />
      <path d="M30 4l4 4m0-4-4 4" />
      <path d="M19 21h13v13a13.500 13.500 0 1 1-13-13z" />
      <circle cx="19" cy="34" r="9.500" />
      <circle cx="19" cy="34" r="6" />
      <path d="M0 68.500h38M0 201.500h38" stroke="#656a70" strokeWidth="1" />
      <path d="m17 60 5 0-2.500 2.500zM17 147h5l-2.500 2.500zM17 194h5l-2.500 2.500z" fill="currentColor" />
      <path d="M11 92c-4-6-7-9-5-10s5 3 7 5c-2-7-3-11-1-12s3 5 4 9c0-7 0-11 2-11s2 5 2 11c1-6 2-10 4-9s1 6 0 11c2-4 4-7 5-5 1 3-1 8-4 13-2 4-3 7-3 9H13c0-4 0-6-2-11z" />
      <path d="m6 110 17 17M23 110 6 127M5 115v-6h6M18 109h6v6M5 122v6h6" />
      <circle cx="25" cy="127" r="6" />
      <path d="m29 132 6 5" strokeWidth="3" />
      <path d="M16 160h6v22h-6z" />
      <circle cx="19" cy="158" r="3.500" />
      <path d="M16 168c-15 2-15 8 0 9M22 168c15 2 15 8 0 9h-9l4-4m-4 4 4 4" />
      <path d="M5 206h8v8H5zM15 206h8v8h-8zM25 206h8v8h-8zM5 218h19v16H5z" />
      <path d="m11 222 7 4-7 4z" fill="currentColor" />
      <circle cx="32" cy="250" r="4" />
      <path d="M30 249h4l-2 2.500z" />
    </svg>
  </div>
);

const CommandLine = () => (
  <div className="absolute inset-x-0 bottom-px flex justify-center pr-2 font-['DejaVu_Sans_Mono',monospace] text-[15px]">
    <div className="flex w-[1150px] flex-col">
      <div className="mr-2 mb-[5px] flex flex-col items-start gap-1.5 self-end leading-[19px] whitespace-pre">
        <span className="rounded-[2px] bg-[#4d5052] px-0.5 text-[#b4b6b8]">
          Specify corner of window, enter a scale factor (nX or nXP), or
        </span>
        <span className="rounded-[2px] bg-[#54575a] px-0.5 text-[#dcdcdc]">
          [All/Center/Dynamic/Extents/Previous/Scale/Window/Object] &lt;real time&gt;: E
        </span>
        <span className="rounded-[2px] bg-[#5b5e60] px-0.5 text-white">Regenerating model.</span>
      </div>
      <div className="flex h-8">
        <div className="flex w-[70px] items-center bg-[#292e3b] pl-1">
          <svg width="7" height="22" viewBox="0 0 7 22" stroke="#c9ccd2" strokeWidth="2" strokeDasharray="2 2">
            <path d="M1 0v22M6 0v22" />
          </svg>
          <button type="button" aria-label="Close command line" className="ml-[7px]">
            <svg width="12" height="12" viewBox="0 0 12 12" stroke="#c9ccc9" strokeWidth="2.200">
              <path d="m1 1 10 10M11 1 1 11" />
            </svg>
          </button>
          <button type="button" aria-label="Customize" className="ml-3.5">
            <Icon>
              <path d="m3 17.500 9-9" stroke="#c4c6c3" strokeWidth="3.500" strokeLinecap="round" />
              <path d="M17.800 4.500A4.300 4.300 0 1 1 13.500 1.500l-1 3.500 2.500 2z" fill="#c4c6c3" />
            </Icon>
          </button>
        </div>
        <label className="flex flex-1 items-center rounded-[2px] bg-[#bbbdbe] pr-1.5 pl-1">
          <svg width="21" height="16" viewBox="0 0 21 16" fill="none" stroke="#6c6f72">
            <path d="M.5.500h20v15H.5z" />
            <path d="M1 2.500h19" strokeWidth="4" />
            <path d="m3 7 3 2.500L3 12M7 12.500h5" />
          </svg>
          <Caret big dark className="ml-0.5" />
          <input
            type="text"
            aria-label="Command"
            placeholder="Type a command"
            className="min-w-0 flex-1 bg-transparent pl-2 italic outline-none placeholder:text-[#66696c]"
          />
          <svg width="8" height="5" viewBox="0 0 8 5" fill="#5c5f62">
            <path d="M0 5h8L4 0z" />
          </svg>
        </label>
      </div>
    </div>
  </div>
);

const DrawingArea = () => (
  <main className="relative min-h-[640px] flex-1 border-t-2 border-[#1c222b] bg-[#212830]">
    <div className="flex items-center justify-between pt-1 pr-3 pl-px">
      <button type="button" className="text-[14px] text-[#e9ebee]">
        −][Top][2D Wireframe]
      </button>
      <div className="mt-1 flex items-center gap-3">
        <button type="button" aria-label="Minimize drawing" className="mt-1.5 h-1 w-[13px] bg-white" />
        <button type="button" aria-label="Restore drawing">
          <svg width="13" height="13" viewBox="0 0 13 13" fill="none" stroke="#fff">
            <path d="M3 .5h9.500V10" />
            <path d="M1.500 4h7.500v7.500H1.500z" strokeWidth="3" />
          </svg>
        </button>
        <button type="button" aria-label="Close drawing">
          <svg width="11" height="11" viewBox="0 0 11 11" stroke="#fff" strokeWidth="2.800">
            <path d="m1 .5 9 10M10 .5l-9 10" />
          </svg>
        </button>
      </div>
    </div>

    <ViewCube />
    <NavBar />

    {/* UCS icon */}
    <svg width="100" height="96" viewBox="0 0 100 96" className="absolute bottom-3 left-0" fill="none" stroke="#fff">
      <path d="M11.500 25v63.500H74" />
      <path d="M6.500 82.500h11v10h-11z" />
      <path d="m13 6 7.500 8L28 6M20.500 14v7" />
      <path d="m78 72 15 15M93 72 78 87" />
    </svg>

    <CommandLine />
  </main>
);

/* ---------- status bar ---------- */

type StatusItem = { name: string; icon: React.ReactNode; active?: boolean; width?: string };

const Person = ({ extra }: { extra?: React.ReactNode }) => (
  <Icon>
    <path d="M9 0c2 3 2.500 7 3 11l5 8-5-2-3-3-3 3-5 2 5-8c.5-4 1-8 3-11z" fill="#dcdee2" />
    {extra}
  </Icon>
);

const dropdown = (name: string): StatusItem => ({ name, icon: <Caret big />, width: "w-5" });

const statusGroups: StatusItem[][] = [
  [
    {
      name: "Grid",
      icon: (
        <Icon>
          <path d="M5 0v20M10 0v20M15 0v20M0 5h20M0 10h20M0 15h20" stroke="#dcdee2" strokeWidth="1.300" />
        </Icon>
      ),
    },
    {
      name: "Snap",
      icon: (
        <Icon>
          <path d="M2 4h16M2 9h16M2 14h16M2 18.500h16" stroke="#dcdee2" strokeWidth="2.200" strokeDasharray="2.200 4" />
        </Icon>
      ),
    },
    dropdown("Snap settings"),
  ],
  [
    {
      name: "Ortho",
      icon: (
        <Icon>
          <path d="M1 0v18.500h19M1 12.500h6v6" stroke="#b9bdc5" />
        </Icon>
      ),
    },
    {
      name: "Polar tracking",
      icon: (
        <Icon>
          <circle cx="9" cy="11" r="8" stroke="#b9bdc5" />
          <path d="M9 11h11M9 11l6-9" stroke="#b9bdc5" />
          <path d="m15 8 0 6-5-3z" fill="#b9bdc5" />
        </Icon>
      ),
    },
    dropdown("Polar settings"),
    {
      name: "Isodraft",
      icon: (
        <Icon>
          <path d="M10 0v18" stroke="#4aa86a" strokeWidth="1.500" />
          <path d="m2 2 15 15" stroke="#a85757" strokeWidth="1.500" />
          <rect x="8.500" y="8" width="3" height="3" fill="#3b4453" stroke="#b9bdc5" />
        </Icon>
      ),
    },
    dropdown("Isodraft settings"),
    {
      name: "Object snap tracking",
      active: true,
      icon: (
        <Icon>
          <path d="M18 1 2 18.500h18" stroke="#dce8f4" strokeWidth="1.300" />
          <rect x="8" y="8" width="3.500" height="3.500" fill="#fff" />
        </Icon>
      ),
    },
    {
      name: "Object snap",
      active: true,
      icon: (
        <Icon>
          <rect x="2.500" y="2.500" width="16" height="16" stroke="#fff" strokeWidth="1.300" />
          <rect x=".7" y=".7" width="5" height="5" fill="#5b8bc0" stroke="#fff" strokeWidth="1.300" />
        </Icon>
      ),
    },
    dropdown("Object snap settings"),
  ],
  [
    {
      name: "Annotation visibility",
      active: true,
      icon: <Person extra={<circle cx="16.500" cy="5" r="2.800" stroke="#fff" />} />,
    },
    {
      name: "Auto scale",
      icon: <Person extra={<path d="m17 0-4 5.500h3L15 10l4.500-6H17l1.500-4z" fill="#dcdee2" />} />,
    },
    { name: "Annotation scale", icon: <Person /> },
    {
      name: "Scale",
      width: "w-[42px]",
      icon: (
        <>
          <span className="mr-1">1:1</span>
          <Caret big />
        </>
      ),
    },
  ],
  [
    {
      name: "Workspace",
      icon: (
        <Icon>
          <circle cx="10" cy="10" r="5.500" stroke="#dcdee2" strokeWidth="4" />
          <path
            d="M10 0v4M10 16v4M0 10h4M16 10h4M3 3l3 3M14 14l3 3M3 17l3-3M14 6l3-3"
            stroke="#dcdee2"
            strokeWidth="3.500"
          />
        </Icon>
      ),
    },
    dropdown("Workspace settings"),
  ],
  [
    {
      name: "Annotation monitor",
      icon: (
        <Icon>
          <path d="M10 0v20M0 10h20" stroke="#dcdee2" strokeWidth="2.500" />
        </Icon>
      ),
    },
  ],
  [
    {
      name: "Isolate objects",
      icon: (
        <Icon>
          <rect x="1" y="1" width="7" height="6" stroke="#b9bdc5" />
          <circle cx="15.500" cy="8.500" r="4" stroke="#b9bdc5" />
          <path d="m8.500 12-4.500 7.500h9z" stroke="#b9bdc5" />
        </Icon>
      ),
    },
  ],
  [
    {
      name: "Graphics performance",
      width: "w-[38px]",
      icon: (
        <Icon>
          <path d="M1 0h18v20H1z" fill="#d6d8dc" />
          <path d="M1 14 5 5l4 8 3 4M8 9l4-5 4 6 3 3" stroke="#6e7a8c" strokeWidth="1.300" />
          <path d="m15 9 5 11H10z" fill="#f0915a" />
        </Icon>
      ),
    },
  ],
  [
    {
      name: "Clean screen",
      icon: (
        <Icon>
          <path d="M.5 3h19v14H.5z" stroke="#dcdee2" />
          <path d="m4 14 4-4M12 9l4-4" stroke="#dcdee2" />
          <path d="M3 15v-5l5 5zM17 5v5l-5-5z" fill="#dcdee2" />
        </Icon>
      ),
    },
    {
      name: "Customization",
      icon: (
        <Icon>
          <path d="M0 3h20M0 10h20M0 17h20" stroke="#dcdee2" strokeWidth="2.500" />
        </Icon>
      ),
    },
  ],
];

const StatusBar = () => (
  <footer className="border-t border-[#4a4d53]">
    <div className="flex h-[34px] justify-between">
      <nav className="flex items-start text-[#b4b8be]">
        <button
          type="button"
          className="ml-[7px] h-[22px] w-[70px] rounded-b-[10px] bg-[#3b4453] leading-5 font-bold text-white"
        >
          Model
        </button>
        <button type="button" className="ml-1 h-[22px] w-[76px] rounded-b-[10px] bg-[#2d3440] leading-5">
          Layout1
        </button>
        <button type="button" className="ml-1 h-[22px] w-[80px] rounded-b-[10px] bg-[#2d3440] leading-5">
          Layout2
        </button>
        <button
          type="button"
          aria-label="New layout"
          className="mt-0.5 ml-[5px] flex h-[18px] w-[27px] items-center justify-center rounded-[6px] bg-[#2d3440]"
        >
          <svg width="11" height="11" viewBox="0 0 11 11" stroke="#b4b8be" strokeWidth="2">
            <path d="M5.500 0v11M0 5.500h11" />
          </svg>
        </button>
      </nav>

      <div className="mt-px mr-px flex h-[30px] gap-[3px] text-white">
        <button type="button" className="w-[59px] bg-[#333c4a]">
          MODEL
        </button>
        {statusGroups.map((group) => (
          <div key={group[0].name} className="flex bg-[#333c4a]">
            {group.map((item) => (
              <button
                type="button"
                key={item.name}
                aria-label={item.name}
                className={clsx(
                  "flex items-center justify-center",
                  item.width ?? "w-[30px]",
                  item.active && "border-r border-[#333c4a] bg-[#5b8bc0]"
                )}
              >
                {item.icon}
              </button>
            ))}
          </div>
        ))}
      </div>
    </div>
    <div className="h-0.5 bg-[#4d4546] pl-[52px]">
      <div className="h-full w-[430px] bg-[#efefef]" />
    </div>
  </footer>
);

export default function App() {
  return (
    <div className="flex min-h-screen flex-col overflow-hidden bg-[#222933] font-['Open_Sans',sans-serif] text-[14px] leading-5">
      <Header />
      <Ribbon />
      <FileTabs />
      <DrawingArea />
      <StatusBar />
    </div>
  );
}
